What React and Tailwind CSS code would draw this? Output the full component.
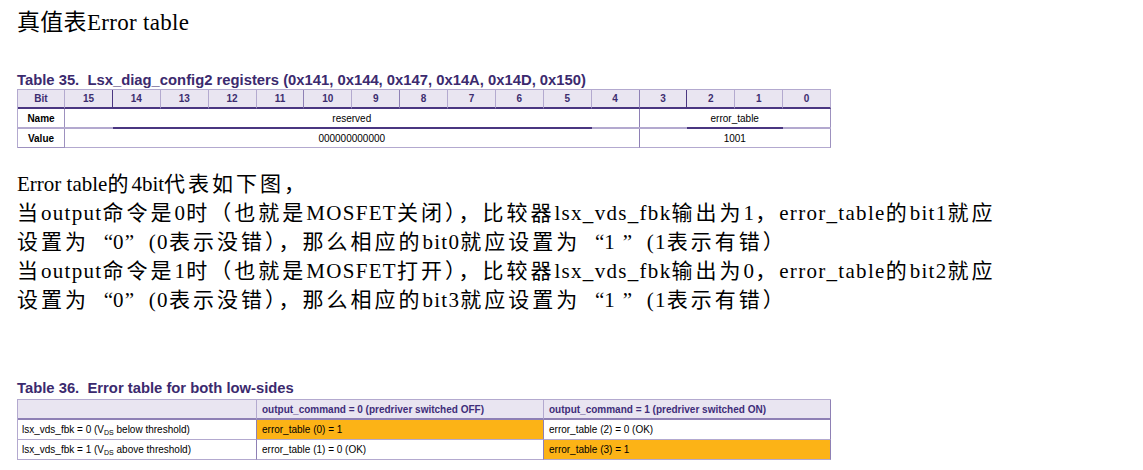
import React from "react";

const serif = "font-[family-name:'Liberation_Serif','Noto_Sans_CJK_SC',serif]";
const sans = "font-[family-name:'Liberation_Sans',Arial,sans-serif]";

const bits = [15, 14, 13, 12, 11, 10, 9, 8, 7, 6, 5, 4, 3, 2, 1, 0];

// right border colour of each header cell
const headRight = (b) => {
  if (b === 15 || b === 3) return "border-r-[#4a3681]";
  if (b === 9 || b === 11 || b === 4) return "border-r-[#8e80b5]";
  return "border-r-[#b3a9cf]";
};

const CJK = /[\u3000-\u303f\u4e00-\u9fff\uff00-\uffef]/;
const RUNS = /“|”|[\u3000-\u303f\u4e00-\u9fff\uff00-\uffef]+|[^“”\u3000-\u303f\u4e00-\u9fff\uff00-\uffef]+/g;

// CJK runs get wider spacing than the latin runs, quotes are full-width boxes
const Line = ({ text, latin = "tracking-[1.3px]" }) => (
  <div>
    {text.match(RUNS).map((r, i) => {
      if (r === "“")
        return <span key={i} className="inline-block w-[24px] text-right">“</span>;
      if (r === "”")
        return <span key={i} className="inline-block w-[24px] text-left">”</span>;
      if (CJK.test(r))
        return <span key={i} className="tracking-[3px]">{r}</span>;
      return <span key={i} className={`whitespace-pre ${latin}`}>{r}</span>;
    })}
  </div>
);

const RegisterTable = () => (
  <div className={`${sans} grid w-[814px] grid-cols-[47px_repeat(16,minmax(0,1fr))] border-l border-t border-[#b3a9cf] text-[10px]`}>
    {/* header row */}
    <div className="flex h-[19px] items-center justify-center border-r border-b-2 border-r-[#b3a9cf] border-b-[#4a3681] bg-[#e9e5f1] font-bold text-[#3c2d6f]">
      Bit
    </div>
    {bits.map((b) => (
      <div
        key={b}
        className={`flex h-[19px] items-center justify-center border-r border-b-2 border-b-[#4a3681] bg-[#e9e5f1] font-bold text-[#3c2d6f] ${headRight(b)}`}
      >
        {b}
      </div>
    ))}

    {/* name row */}
    <div className="flex h-[18px] items-center justify-center border-r border-[#9d91bf] font-bold text-black">Name</div>
    <div className="col-span-12 flex h-[18px] items-center justify-center border-r border-[#8e80b5] text-black">reserved</div>
    <div className="col-span-4 flex h-[18px] items-center justify-center border-r border-[#9d91bf] text-black">error_table</div>

    {/* name row bottom rule */}
    <div className="col-span-2 h-[2px] bg-[#b3a9cf]" />
    <div className="col-span-10 h-[2px] bg-[#4a3681]" />
    <div className="col-span-2 h-[2px] bg-[#b3a9cf]" />
    <div className="col-span-2 h-[2px] bg-[#4a3681]" />
    <div className="col-span-1 h-[2px] bg-[#b3a9cf]" />

    {/* value row */}
    <div className="flex h-[19px] items-center justify-center border-r border-b border-[#9d91bf] font-bold text-black">Value</div>
    <div className="col-span-12 flex h-[19px] items-center justify-center border-r border-b border-[#8e80b5] border-b-[#b3a9cf] text-black">
      000000000000
    </div>
    <div className="col-span-4 flex h-[19px] items-center justify-center border-r border-b border-[#9d91bf] border-b-[#b3a9cf] text-black">
      1001
    </div>
  </div>
);

const Vds = ({ v, where }) => (
  <span className="whitespace-pre">
    lsx_vds_fbk = {v} (V<sub className="text-[7px]">DS</sub>{" "}{where} threshold)
  </span>
);

const ErrorTable = () => (
  <div className={`${sans} grid w-[814px] grid-cols-[239px_287px_minmax(0,1fr)] border-l border-t border-[#b3a9cf] text-[10px] text-black`}>
    <div className="h-[20px] border-r border-b-2 border-r-[#b3a9cf] border-b-[#8e80b5] bg-[#e9e5f1]" />
    <div className="flex h-[20px] items-center border-r border-b-2 border-r-[#b3a9cf] border-b-[#8e80b5] bg-[#e9e5f1] pl-[5px] font-bold text-[#3f2e7a]">
      output_command = 0 (predriver switched OFF)
    </div>
    <div className="flex h-[20px] items-center border-r border-b-2 border-r-[#8e80b5] border-b-[#8e80b5] bg-[#e9e5f1] pl-[5px] font-bold text-[#3f2e7a]">
      output_command = 1 (predriver switched ON)
    </div>

    <div className="flex h-[20px] items-center border-r border-b border-r-[#8e80b5] border-b-[#b3a9cf] pl-[4px]">
      <Vds v="0" where="below" />
    </div>
    <div className="flex h-[20px] items-center border-r border-b border-r-[#8e80b5] border-b-[#b3a9cf] bg-[#fcb316] pl-[5px]">
      error_table (0) = 1
    </div>
    <div className="flex h-[20px] items-center border-r border-b border-r-[#8e80b5] border-b-[#b3a9cf] pl-[5px]">
      error_table (2) = 0 (OK)
    </div>

    <div className="flex h-[20px] items-center border-r border-b border-r-[#8e80b5] border-b-[#b3a9cf] pl-[4px]">
      <Vds v="1" where="above" />
    </div>
    <div className="flex h-[20px] items-center border-r border-b border-r-[#8e80b5] border-b-[#b3a9cf] pl-[5px]">
      error_table (1) = 0 (OK)
    </div>
    <div className="flex h-[20px] items-center border-r border-b border-r-[#8e80b5] border-b-[#b3a9cf] bg-[#fcb316] pl-[5px]">
      error_table (3) = 1
    </div>
  </div>
);

const Caption = ({ children, className = "" }) => (
  <div className={`${sans} whitespace-pre text-[14.8px] leading-[18px] font-bold text-[#3b2a6e] ${className}`}>{children}</div>
);

export default function App() {
  return (
    <div className="min-h-[470px] w-[1143px] bg-white pl-[17px] text-black">
      {/* title */}
      <div className={`${serif} pt-[9px] text-[23px] leading-[28px] tracking-[0.3px] whitespace-nowrap`}>真值表Error table</div>

      <Caption className="mt-[34px]">Table 35.  Lsx_diag_config2 registers (0x141, 0x144, 0x147, 0x14A, 0x14D, 0x150)</Caption>
      <RegisterTable />

      {/* explanation */}
      <div className={`${serif} mt-[22px] text-[21px] leading-[29px] whitespace-nowrap`}>
        <Line text="Error table的4bit代表如下图，" latin="tracking-[0px]" />
        <Line text="当output命令是0时（也就是MOSFET关闭），比较器lsx_vds_fbk输出为1，error_table的bit1就应" />
        <Line text="设置为“0”(0表示没错），那么相应的bit0就应设置为“1 ”(1表示有错）" />
        <Line text="当output命令是1时（也就是MOSFET打开），比较器lsx_vds_fbk输出为0，error_table的bit2就应" />
        <Line text="设置为“0”(0表示没错），那么相应的bit3就应设置为“1 ”(1表示有错）" />
      </div>

      <Caption className="mt-[64px]">Table 36.  Error table for both low-sides</Caption>
      <div className="mt-[2px]">
        <ErrorTable />
      </div>
    </div>
  );
}
